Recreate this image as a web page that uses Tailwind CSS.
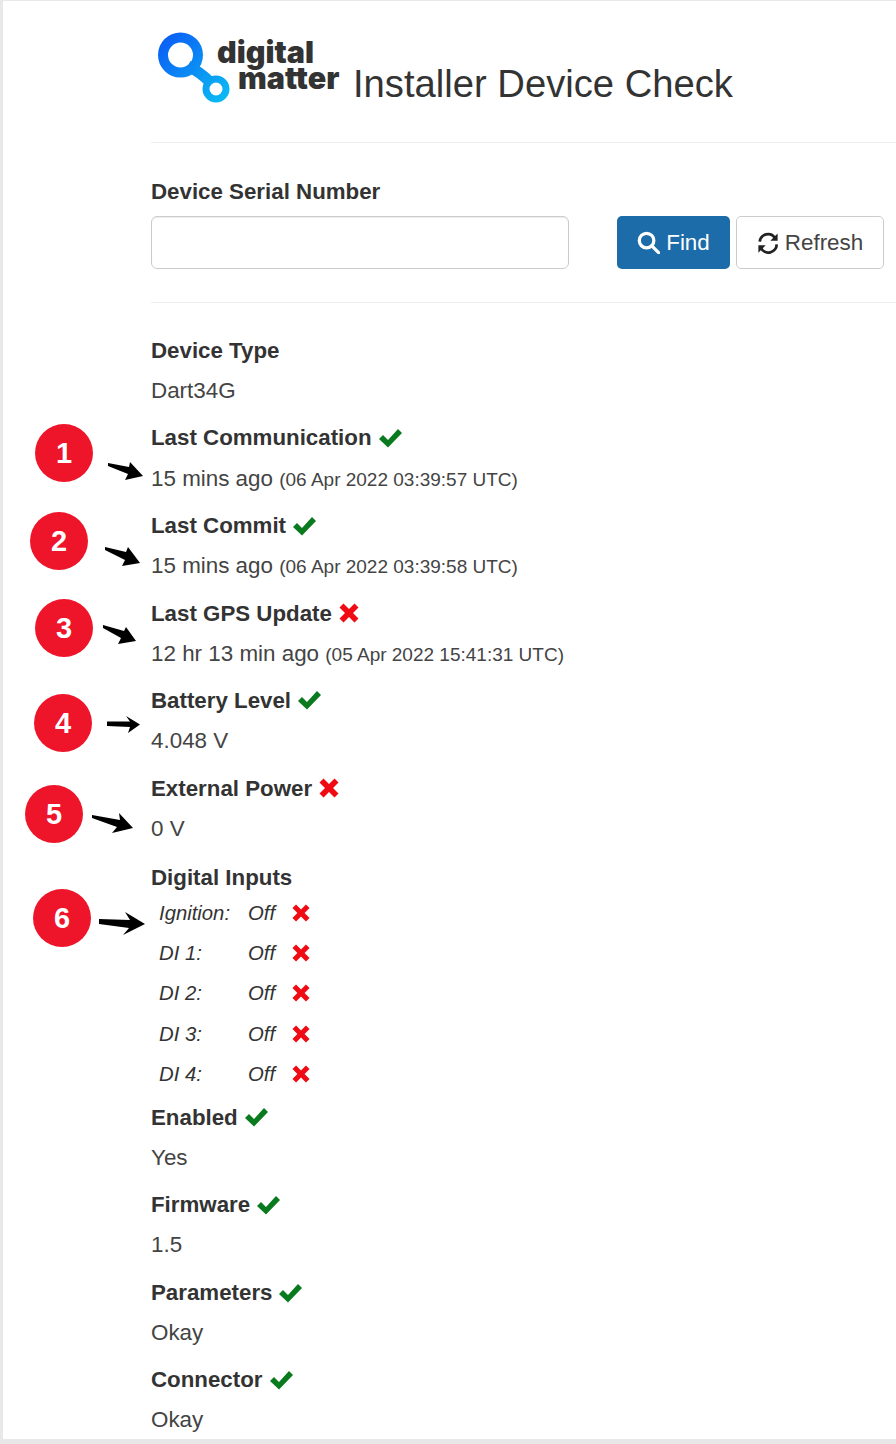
<!DOCTYPE html>
<html lang="en">
<head>
    <meta charset="UTF-8">
    <title>Installer Device Check</title>
    <script src="https://cdn.jsdelivr.net/npm/@tailwindcss/browser@4"></script>
</head>
<body class="bg-[#e8e8e8] font-['Liberation_Sans',Arial,sans-serif] text-[22.4px] leading-[32px] text-[#444]">
    <div class="relative h-[1438px] ml-[3px] mt-px bg-white overflow-hidden pl-[148px]">
        <!-- Header -->
        <header class="flex items-end h-[142px] border-b border-[#eee] pb-[35px]">
            <svg class="w-[80px] h-[76px] -ml-[1px] mb-[1px] shrink-0" viewBox="0 0 80 76" fill="none">
                <defs>
                    <linearGradient id="logoGrad" gradientUnits="userSpaceOnUse" x1="10" y1="8" x2="72" y2="70">
                        <stop offset="0" stop-color="#0a5cf5"></stop>
                        <stop offset="1" stop-color="#0bb8f3"></stop>
                    </linearGradient>
                </defs>
                <path d="M38 36 C46 40 52 44 60 52" stroke="url(#logoGrad)" stroke-width="11"></path>
                <circle cx="30.5" cy="25" r="17.5" stroke="url(#logoGrad)" stroke-width="10"></circle>
                <circle cx="66" cy="59" r="10" stroke="url(#logoGrad)" stroke-width="7"></circle>
            </svg>
            <div class="w-[108px] shrink-0 font-['Inter',sans-serif] font-black text-[#333] text-[30.5px] leading-[26px] mb-[16px]">
                <div class="-ml-[13px]">digital</div>
                <div class="ml-[8px] whitespace-nowrap">matter</div>
            </div>
            <h1 class="ml-[15px] mb-[1px] text-[38.2px] leading-[44px] text-[#333] whitespace-nowrap">Installer Device Check</h1>
        </header>

        <!-- Search -->
        <section class="border-b border-[#eee] h-[160px] pt-[33px]">
            <label class="block font-bold text-[22.3px] leading-[32px] text-[#333]">Device Serial Number</label>
            <div class="flex mt-[8px]">
                <input class="w-[418px] h-[53px] rounded-[6px] border border-[#ccc] bg-white shadow-[inset_0_1px_1px_rgba(0,0,0,0.075)]">
                <button class="ml-[48px] w-[113px] h-[53px] rounded-[5px] bg-[#1b6ca8] text-white flex items-center justify-center gap-[6px]">
                    <svg class="w-[23px] h-[23px]" viewBox="0 0 24 24" fill="none" stroke="currentColor" stroke-width="3.4"><circle cx="10" cy="10" r="7.6"></circle><path d="M15.5 15.5L22.5 22.5" stroke-linecap="round"></path></svg>
                    Find
                </button>
                <button class="ml-[6px] w-[148px] h-[53px] rounded-[5px] border border-[#ccc] bg-white flex items-center justify-center gap-[6px]">
                    <svg class="w-[22px] h-[22px]" viewBox="0 0 24 24" fill="none" stroke="#222" stroke-width="3"><path d="M3 10.5A9 9 0 0 1 19.5 6.5"></path><path d="M21.5 13.5A9 9 0 0 1 4.5 17.5"></path><path d="M22.5 1.5V9.5H14.5Z" fill="#222" stroke="none"></path><path d="M1.5 22.5V14.5H9.5Z" fill="#222" stroke="none"></path></svg>
                    Refresh
                </button>
            </div>
        </section>

        <!-- Status fields -->
        <main class="pt-[31px]">
            <div class="h-[87.5px]">
                <h2 class="font-bold text-[22.3px] leading-[34px] text-[#333]">Device Type</h2>
                <p class="mt-[6px] leading-[34px]">Dart34G</p>
            </div>
            <div class="h-[87.5px]">
                <h2 class="font-bold text-[22.3px] leading-[32px] text-[#333] flex items-center gap-[7px]">Last Communication <svg class="w-[23px] h-[20px] text-[#0a7a1f]" viewBox="0 0 23 20" fill="currentColor"><path d="M0 11L4 7L9 12L19 1L23 5L9 19.5Z"></path></svg></h2>
                <p class="mt-[8px] leading-[34px]">15 mins ago <span class="text-[19px]">(06 Apr 2022 03:39:57 UTC)</span></p>
            </div>
            <div class="h-[87.5px]">
                <h2 class="font-bold text-[22.3px] leading-[34px] text-[#333] flex items-center gap-[7px]">Last Commit <svg class="w-[23px] h-[20px] text-[#0a7a1f]" viewBox="0 0 23 20" fill="currentColor"><path d="M0 11L4 7L9 12L19 1L23 5L9 19.5Z"></path></svg></h2>
                <p class="mt-[6px] leading-[34px]">15 mins ago <span class="text-[19px]">(06 Apr 2022 03:39:58 UTC)</span></p>
            </div>
            <div class="h-[87.5px]">
                <h2 class="font-bold text-[22.3px] leading-[34px] text-[#333] flex items-center gap-[7px]">Last GPS Update <svg class="w-[20px] h-[20px] text-[#f00a14] -mt-[2px]" viewBox="0 0 20 20" fill="currentColor"><path d="M4.5 0.5L10 6L15.5 0.5L19.5 4.5L14 10L19.5 15.5L15.5 19.5L10 14L4.5 19.5L0.5 15.5L6 10L0.5 4.5Z"></path></svg></h2>
                <p class="mt-[6px] leading-[34px]">12 hr 13 min ago <span class="text-[19px]">(05 Apr 2022 15:41:31 UTC)</span></p>
            </div>
            <div class="h-[87.5px]">
                <h2 class="font-bold text-[22.3px] leading-[34px] text-[#333] flex items-center gap-[7px]">Battery Level <svg class="w-[23px] h-[20px] text-[#0a7a1f] -mt-[2px]" viewBox="0 0 23 20" fill="currentColor"><path d="M0 11L4 7L9 12L19 1L23 5L9 19.5Z"></path></svg></h2>
                <p class="mt-[6px] leading-[34px]">4.048 V</p>
            </div>
            <div class="h-[87.5px]">
                <h2 class="font-bold text-[22.3px] leading-[34px] text-[#333] flex items-center gap-[7px]">External Power <svg class="w-[20px] h-[20px] text-[#f00a14] -mt-[2px]" viewBox="0 0 20 20" fill="currentColor"><path d="M4.5 0.5L10 6L15.5 0.5L19.5 4.5L14 10L19.5 15.5L15.5 19.5L10 14L4.5 19.5L0.5 15.5L6 10L0.5 4.5Z"></path></svg></h2>
                <p class="mt-[6px] leading-[34px]">0 V</p>
            </div>

            <div class="mt-[2px]">
                <h2 class="font-bold text-[22.3px] leading-[34px] text-[#333]">Digital Inputs</h2>
                <div class="italic text-[20.3px] text-[#333] -mt-[2px] pl-[8px]">
                    <div class="flex items-center h-[40.2px]"><span class="w-[89px]">Ignition:</span><span class="w-[44px]">Off</span><svg class="w-[18px] h-[18px] text-[#f00a14]" viewBox="0 0 20 20" fill="currentColor"><path d="M4.5 0.5L10 6L15.5 0.5L19.5 4.5L14 10L19.5 15.5L15.5 19.5L10 14L4.5 19.5L0.5 15.5L6 10L0.5 4.5Z"></path></svg></div>
                    <div class="flex items-center h-[40.2px]"><span class="w-[89px]">DI 1:</span><span class="w-[44px]">Off</span><svg class="w-[18px] h-[18px] text-[#f00a14]" viewBox="0 0 20 20" fill="currentColor"><path d="M4.5 0.5L10 6L15.5 0.5L19.5 4.5L14 10L19.5 15.5L15.5 19.5L10 14L4.5 19.5L0.5 15.5L6 10L0.5 4.5Z"></path></svg></div>
                    <div class="flex items-center h-[40.2px]"><span class="w-[89px]">DI 2:</span><span class="w-[44px]">Off</span><svg class="w-[18px] h-[18px] text-[#f00a14]" viewBox="0 0 20 20" fill="currentColor"><path d="M4.5 0.5L10 6L15.5 0.5L19.5 4.5L14 10L19.5 15.5L15.5 19.5L10 14L4.5 19.5L0.5 15.5L6 10L0.5 4.5Z"></path></svg></div>
                    <div class="flex items-center h-[40.2px]"><span class="w-[89px]">DI 3:</span><span class="w-[44px]">Off</span><svg class="w-[18px] h-[18px] text-[#f00a14]" viewBox="0 0 20 20" fill="currentColor"><path d="M4.5 0.5L10 6L15.5 0.5L19.5 4.5L14 10L19.5 15.5L15.5 19.5L10 14L4.5 19.5L0.5 15.5L6 10L0.5 4.5Z"></path></svg></div>
                    <div class="flex items-center h-[40.2px]"><span class="w-[89px]">DI 4:</span><span class="w-[44px]">Off</span><svg class="w-[18px] h-[18px] text-[#f00a14]" viewBox="0 0 20 20" fill="currentColor"><path d="M4.5 0.5L10 6L15.5 0.5L19.5 4.5L14 10L19.5 15.5L15.5 19.5L10 14L4.5 19.5L0.5 15.5L6 10L0.5 4.5Z"></path></svg></div>
                </div>
            </div>

            <div class="h-[87.5px] mt-[7px]">
                <h2 class="font-bold text-[22.3px] leading-[34px] text-[#333] flex items-center gap-[7px]">Enabled <svg class="w-[23px] h-[20px] text-[#0a7a1f] -mt-[2px]" viewBox="0 0 23 20" fill="currentColor"><path d="M0 11L4 7L9 12L19 1L23 5L9 19.5Z"></path></svg></h2>
                <p class="mt-[6px] leading-[34px]">Yes</p>
            </div>
            <div class="h-[87.5px]">
                <h2 class="font-bold text-[22.3px] leading-[34px] text-[#333] flex items-center gap-[7px]">Firmware <svg class="w-[23px] h-[20px] text-[#0a7a1f]" viewBox="0 0 23 20" fill="currentColor"><path d="M0 11L4 7L9 12L19 1L23 5L9 19.5Z"></path></svg></h2>
                <p class="mt-[6px] leading-[34px]">1.5</p>
            </div>
            <div class="h-[87.5px]">
                <h2 class="font-bold text-[22.3px] leading-[34px] text-[#333] flex items-center gap-[7px]">Parameters <svg class="w-[23px] h-[20px] text-[#0a7a1f]" viewBox="0 0 23 20" fill="currentColor"><path d="M0 11L4 7L9 12L19 1L23 5L9 19.5Z"></path></svg></h2>
                <p class="mt-[6px] leading-[34px]">Okay</p>
            </div>
            <div class="h-[87.5px]">
                <h2 class="font-bold text-[22.3px] leading-[34px] text-[#333] flex items-center gap-[7px]">Connector <svg class="w-[23px] h-[20px] text-[#0a7a1f]" viewBox="0 0 23 20" fill="currentColor"><path d="M0 11L4 7L9 12L19 1L23 5L9 19.5Z"></path></svg></h2>
                <p class="mt-[6px] leading-[34px]">Okay</p>
            </div>
        </main>

        <!-- Annotations laid over the page -->
        <div class="absolute left-[32px] top-[423px] w-[58px] h-[58px] rounded-full bg-[#ee1429] text-white font-bold text-[29px] flex items-center justify-center">1</div>
        <div class="absolute left-[27px] top-[511px] w-[58px] h-[58px] rounded-full bg-[#ee1429] text-white font-bold text-[29px] flex items-center justify-center">2</div>
        <div class="absolute left-[32px] top-[598px] w-[58px] h-[58px] rounded-full bg-[#ee1429] text-white font-bold text-[29px] flex items-center justify-center">3</div>
        <div class="absolute left-[31px] top-[693px] w-[58px] h-[58px] rounded-full bg-[#ee1429] text-white font-bold text-[29px] flex items-center justify-center">4</div>
        <div class="absolute left-[22px] top-[784px] w-[58px] h-[58px] rounded-full bg-[#ee1429] text-white font-bold text-[29px] flex items-center justify-center">5</div>
        <div class="absolute left-[30px] top-[888px] w-[58px] h-[58px] rounded-full bg-[#ee1429] text-white font-bold text-[29px] flex items-center justify-center">6</div>

        <svg class="absolute left-0 top-0 w-[200px] h-[1000px] pointer-events-none" viewBox="0 0 200 1000" fill="#000">
            <path d="M105 462L126 466L127 461L140 475L122 479L125 473L105 465Z"></path>
            <path d="M102 546L123 551L125 546L137 562L119 565L122 559L102 549Z"></path>
            <path d="M100 624L121 630L123 626L133 640L115 643L118 637L100 627Z"></path>
            <path d="M104 720.5L127 720.5L123 715L137 723.5L125 732L127 726L104 725Z"></path>
            <path d="M89 814L117 819L116 812L130 827L109 832L114 826L89 817Z"></path>
            <path d="M96 918L127 919L122 911L142 923L120 934L126 927L96 923Z"></path>
        </svg>
    </div>
</body>
</html>
